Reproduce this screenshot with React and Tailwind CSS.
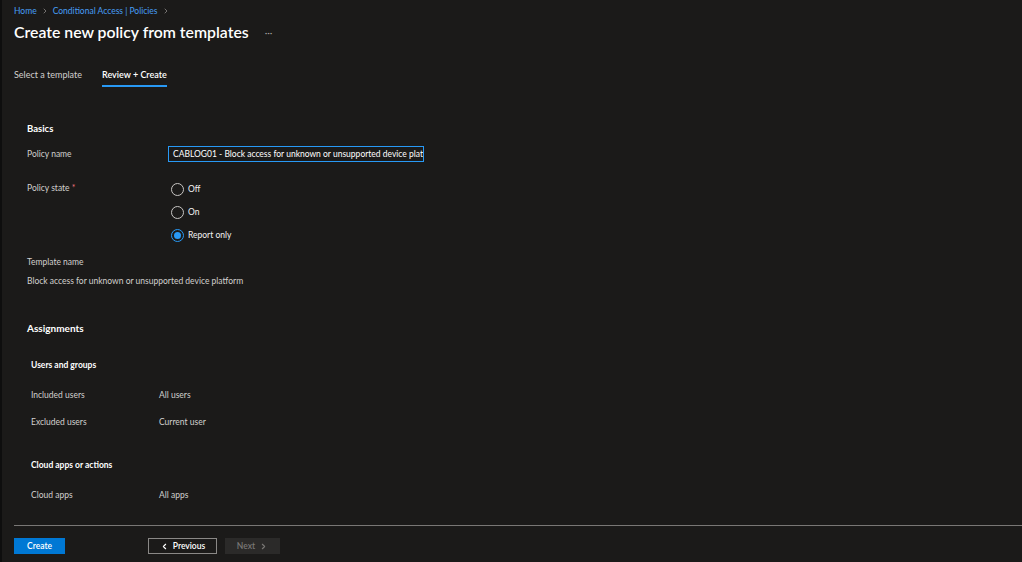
import { ChevronLeft, ChevronRight } from 'lucide-react'

function Radio({ checked, label }) {
  return (
    <label className="flex h-[14px] items-center gap-[4px]">
      <span
        className={
          'flex h-[13px] w-[13px] items-center justify-center rounded-full border ' +
          (checked ? 'border-[#2899f5]' : 'border-[#c8c6c4]')
        }
      >
        {checked && <span className="h-[7px] w-[7px] rounded-full bg-[#2899f5]" />}
      </span>
      <span className="text-[8.5px] leading-[12px] text-[#f3f2f1]">{label}</span>
    </label>
  )
}

function Row({ label, value, mt }) {
  return (
    <div className={'flex text-[8.5px] leading-[12px] text-[#d2d0ce] ' + mt}>
      <div className="w-[128px]">{label}</div>
      <div>{value}</div>
    </div>
  )
}

export default function App() {
  return (
    <div
      className="flex h-[562px] flex-col overflow-hidden border-l-2 border-[#0e0e0e] bg-[#1b1a19] pl-[12px] text-[#f3f2f1]"
      style={{ fontFamily: 'Lato, "Open Sans", sans-serif' }}
    >
      {/* Breadcrumb */}
      <div className="flex items-center gap-[4px] pt-[5px] text-[8.5px] leading-[12px] text-[#479ef5]">
        <span>Home</span>
        <ChevronRight size={8} className="text-[#a19f9d]" />
        <span>Conditional Access | Policies</span>
        <ChevronRight size={8} className="text-[#a19f9d]" />
      </div>

      {/* Title */}
      <div className="mt-[4px] flex items-center">
        <h1 className="text-[15.8px] font-semibold leading-[22px] text-white">
          Create new policy from templates
        </h1>
        <span className="ml-[16px] text-[10px] text-[#a19f9d]">···</span>
      </div>

      {/* Tabs */}
      <div className="mt-[26px] flex gap-[20px] text-[9px] leading-[12px]">
        <div className="pb-[4px] text-[#d2d0ce]">Select a template</div>
        <div className="border-b-2 border-[#2899f5] pb-[4px] font-semibold text-white">Review + Create</div>
      </div>

      {/* Content */}
      <div className="flex-1 pl-[13px]">
        <div className="mt-[36px] text-[9.5px] font-bold leading-[12px] text-white">Basics</div>

        <div className="mt-[11px] flex items-center text-[8.5px]">
          <div className="w-[141px] leading-[12px] text-[#d2d0ce]">Policy name</div>
          <div className="flex h-[16px] w-[256px] items-center overflow-hidden whitespace-nowrap border border-[#2899f5] px-[4px] leading-[12px] text-white">
            CABLOG01 - Block access for unknown or unsupported device platform
          </div>
        </div>

        <div className="mt-[20px] flex text-[8.5px]">
          <div className="w-[144px] leading-[12px] text-[#d2d0ce]">
            Policy state <span className="text-[#f1707b]">*</span>
          </div>
          <div className="flex flex-col gap-[9px]">
            <Radio label="Off" />
            <Radio label="On" />
            <Radio label="Report only" checked />
          </div>
        </div>

        <div className="mt-[14px] text-[8.5px] leading-[12px] text-[#d2d0ce]">Template name</div>
        <div className="mt-[7px] text-[8.5px] leading-[12px] text-[#d2d0ce]">
          Block access for unknown or unsupported device platform
        </div>

        <div className="mt-[34px] text-[10px] font-bold leading-[14px] text-white">Assignments</div>

        <div className="pl-[4px]">
          <div className="mt-[24px] text-[8.5px] font-bold leading-[12px] text-white">Users and groups</div>
          <Row label="Included users" value="All users" mt="mt-[18px]" />
          <Row label="Excluded users" value="Current user" mt="mt-[15px]" />

          <div className="mt-[31px] text-[8.5px] font-bold leading-[12px] text-white">Cloud apps or actions</div>
          <Row label="Cloud apps" value="All apps" mt="mt-[18px]" />
        </div>
      </div>

      {/* Footer */}
      <div className="border-t border-[#797775] pb-[8px] pt-[12px]">
        <div className="flex items-center text-[8.5px] font-semibold">
          <button className="h-[16px] w-[51px] bg-[#0078d4] text-white">Create</button>
          <button className="ml-[83px] flex h-[16px] w-[69px] items-center justify-center gap-[4px] border border-[#8a8886] text-white">
            <ChevronLeft size={9} strokeWidth={3} />
            Previous
          </button>
          <button className="ml-[8px] flex h-[16px] w-[55px] items-center justify-center gap-[4px] bg-[#2b2a29] text-[#797775]">
            Next
            <ChevronRight size={9} strokeWidth={3} />
          </button>
        </div>
      </div>
    </div>
  )
}
